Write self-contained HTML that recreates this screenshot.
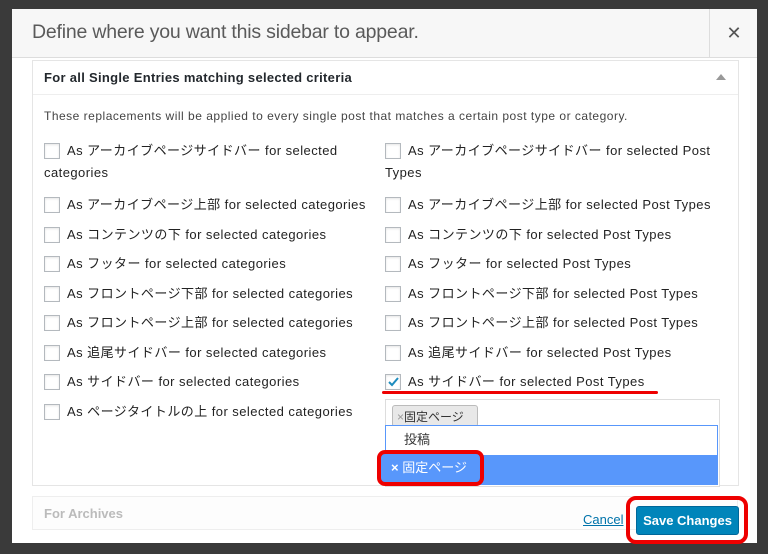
<!DOCTYPE html>
<html><head><meta charset="utf-8"><style>
body{margin:0;width:768px;height:554px;background:#3a3a3a;position:relative;overflow:hidden;font-family:"Liberation Sans","Noto Sans CJK JP",sans-serif;}
.modal{position:absolute;left:12px;top:9px;width:745px;height:534px;background:#fff;}
.hdr{position:absolute;left:0;top:0;width:745px;height:48px;background:#f7f7f7;border-bottom:1px solid #ddd;}
.hdr h1{margin:0;position:absolute;left:20px;top:12px;font-weight:normal;font-size:19.5px;color:#5a5a5a;letter-spacing:-0.2px;}
.cls{position:absolute;left:697px;top:0;width:48px;height:48px;border-left:1px solid #ddd;text-align:center;line-height:48px;font-size:18px;color:#555;}
.panel{position:absolute;left:20px;top:51px;width:705px;height:424px;border:1px solid #e5e5e5;}
.ph{height:33px;border-bottom:1px solid #eee;font-weight:bold;font-size:13px;color:#23282d;line-height:33px;padding-left:11px;letter-spacing:0.3px;}
.tri{position:absolute;right:12px;top:13px;width:0;height:0;border-left:5px solid transparent;border-right:5px solid transparent;border-bottom:6px solid #999;}
.desc{position:absolute;left:11px;top:48px;font-size:12px;color:#444;letter-spacing:0.5px;}
.r{position:absolute;font-size:13px;color:#222;white-space:nowrap;letter-spacing:0.45px;}
.cb{position:absolute;width:14px;height:14px;border:1px solid #b4b9be;background:#fff;box-shadow:inset 0 1px 2px rgba(0,0,0,.1);}
.arch{position:absolute;border:1px solid #eee;background:#fdfdfd;font-weight:bold;font-size:13px;color:#bbb;padding-left:11px;box-sizing:border-box;}
</style></head><body>
<div class="modal">
<div class="hdr"><h1>Define where you want this sidebar to appear.</h1><div class="cls">✕</div></div>
<div class="panel"><div class="ph">For all Single Entries matching selected criteria</div><div class="tri"></div>
<div class="desc">These replacements will be applied to every single post that matches a certain post type or category.</div></div>
</div>
<div class="arch" style="left:32px;top:496px;width:706px;height:34px;line-height:34px;">For Archives</div>
<div class="cb" style="left:44px;top:143px"></div><div class="r" style="left:67px;top:140px">As アーカイブページサイドバー for selected</div><div class="r" style="left:44px;top:165px">categories</div>
<div class="cb" style="left:44px;top:197px"></div><div class="r" style="left:67px;top:194px">As アーカイブページ上部 for selected categories</div>
<div class="cb" style="left:44px;top:227px"></div><div class="r" style="left:67px;top:224px">As コンテンツの下 for selected categories</div>
<div class="cb" style="left:44px;top:256px"></div><div class="r" style="left:67px;top:253px">As フッター for selected categories</div>
<div class="cb" style="left:44px;top:286px"></div><div class="r" style="left:67px;top:283px">As フロントページ下部 for selected categories</div>
<div class="cb" style="left:44px;top:315px"></div><div class="r" style="left:67px;top:312px">As フロントページ上部 for selected categories</div>
<div class="cb" style="left:44px;top:345px"></div><div class="r" style="left:67px;top:342px">As 追尾サイドバー for selected categories</div>
<div class="cb" style="left:44px;top:374px"></div><div class="r" style="left:67px;top:371px">As サイドバー for selected categories</div>
<div class="cb" style="left:44px;top:404px"></div><div class="r" style="left:67px;top:401px">As ページタイトルの上 for selected categories</div>
<div class="cb" style="left:385px;top:143px"></div><div class="r" style="left:408px;top:140px">As アーカイブページサイドバー for selected Post</div><div class="r" style="left:385px;top:165px">Types</div>
<div class="cb" style="left:385px;top:197px"></div><div class="r" style="left:408px;top:194px">As アーカイブページ上部 for selected Post Types</div>
<div class="cb" style="left:385px;top:227px"></div><div class="r" style="left:408px;top:224px">As コンテンツの下 for selected Post Types</div>
<div class="cb" style="left:385px;top:256px"></div><div class="r" style="left:408px;top:253px">As フッター for selected Post Types</div>
<div class="cb" style="left:385px;top:286px"></div><div class="r" style="left:408px;top:283px">As フロントページ下部 for selected Post Types</div>
<div class="cb" style="left:385px;top:315px"></div><div class="r" style="left:408px;top:312px">As フロントページ上部 for selected Post Types</div>
<div class="cb" style="left:385px;top:345px"></div><div class="r" style="left:408px;top:342px">As 追尾サイドバー for selected Post Types</div>
<div class="cb" style="left:385px;top:374px"><svg width="14" height="14" style="position:absolute;left:0;top:0"><path d="M3 7 L6 10 L12 3" stroke="#1e8cbe" stroke-width="2" fill="none"/></svg></div><div class="r" style="left:408px;top:371px">As サイドバー for selected Post Types</div>
<div style="position:absolute;left:382px;top:391px;width:276px;height:3px;background:#e00;border-radius:2px"></div>
<div style="position:absolute;left:385px;top:399px;width:333px;height:86px;border:1px solid #ddd;background:#fff"></div>
<div style="position:absolute;left:392px;top:405px;width:86px;height:22px;border:1px solid #bbb;border-radius:3px;background:#e8e8e8;font-size:12px;color:#333;line-height:22px;padding-left:4px;box-sizing:border-box"><span style="color:#999">×</span>固定ページ</div>
<div style="position:absolute;left:385px;top:425px;width:333px;height:30px;border:1px solid #5897fb;border-bottom:none;background:#fff;box-sizing:border-box;font-size:13px;color:#333;line-height:28px;padding-left:18px">投稿</div>
<div style="position:absolute;left:385px;top:455px;width:333px;height:30px;background:#5897fb"></div>
<div style="position:absolute;left:377px;top:450px;width:107px;height:36px;border:4px solid #e00;border-radius:8px;box-sizing:border-box;background:#5897fb;color:#fff;font-size:13px;line-height:28px;padding-left:10px"><b>×</b> 固定ページ</div>
<a style="position:absolute;left:583px;top:512px;font-size:13px;color:#0073aa;text-decoration:underline">Cancel</a>
<div style="position:absolute;left:626px;top:496px;width:122px;height:48px;border:4px solid #e00;border-radius:10px;box-sizing:border-box"></div>
<div style="position:absolute;left:636px;top:506px;width:103px;height:29px;background:#0085ba;border:1px solid #006799;border-radius:3px;box-sizing:border-box;color:#fff;font-size:13px;font-weight:600;line-height:27px;text-align:center">Save Changes</div>
</body></html>
